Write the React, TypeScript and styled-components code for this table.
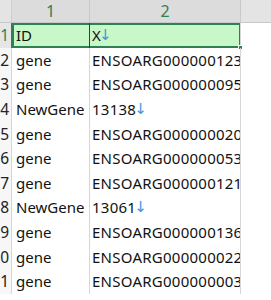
import React from 'react'
import styled, {createGlobalStyle} from 'styled-components'

const GlobalStyle = createGlobalStyle`
    html, body {
        margin: 0;
        padding: 0;
        background: #ffffff;
    }
    body {
        font-family: "Noto Sans", "Open Sans", sans-serif;
        overflow: hidden;
    }
`

type TRow = {
    type: string
    value: string
    arrow?: boolean
}

const rows: TRow[] = [
    {type: 'ID', value: 'X', arrow: true},
    {type: 'gene', value: 'ENSOARG000000123'},
    {type: 'gene', value: 'ENSOARG000000095'},
    {type: 'NewGene', value: '13138', arrow: true},
    {type: 'gene', value: 'ENSOARG000000020'},
    {type: 'gene', value: 'ENSOARG000000053'},
    {type: 'gene', value: 'ENSOARG000000121'},
    {type: 'NewGene', value: '13061', arrow: true},
    {type: 'gene', value: 'ENSOARG000000136'},
    {type: 'gene', value: 'ENSOARG000000022'},
    {type: 'gene', value: 'ENSOARG000000003'},
]

const green = '#2f8052'
const headerGray = '#e4e4e4'
const gridLine = '#d6d6d6'

export default function App() {
    return (
        <Sheet>
            <GlobalStyle/>
            <HeaderRow>
                <Corner/>
                <ColHeader width={77}>1</ColHeader>
                <ColHeader width={150}>2</ColHeader>
                <HeaderRest/>
            </HeaderRow>
            {rows.map((row, i) => {
                const selected = i === 0
                return (
                    <Row key={i}>
                        <RowHeader selected={selected}>{i + 1}</RowHeader>
                        <Range selected={selected}>
                            <Cell width={77} pad={4} cursor={selected}>{row.type}</Cell>
                            <Cell width={150} pad={2} wide>
                                {row.value}
                                {row.arrow && <Arrow>↓</Arrow>}
                            </Cell>
                            {selected && <FillHandle/>}
                        </Range>
                        <Rest/>
                    </Row>
                )
            })}
        </Sheet>
    )
}

const Sheet = styled.div`
    width: 271px;
    height: 300px;
    overflow: hidden;
    display: flex;
    flex-direction: column;
    background: #ffffff;
`

const HeaderRow = styled.div`
    display: flex;
    height: 23px;
    flex-shrink: 0;
    background: ${headerGray};
    border-bottom: 1px solid #c8c8c8;
    box-sizing: border-box;
`

const Corner = styled.div`
    width: 12px;
    border-right: 1px solid #cfcfcf;
    box-sizing: border-box;
`

const ColHeader = styled.div<{width: number}>`
    width: ${({width}) => width}px;
    border-right: 1px solid #c9c9c9;
    display: flex;
    align-items: center;
    justify-content: center;
    font-size: 16px;
    color: ${green};
    background: #dcdcdc;
`

const HeaderRest = styled.div`
    flex: 1;
`

const Row = styled.div`
    display: flex;
    height: 24.6px;
    flex-shrink: 0;
`

const RowHeader = styled.div<{selected: boolean}>`
    width: 12px;
    flex-shrink: 0;
    box-sizing: border-box;
    border-right: 1px solid ${({selected}) => selected ? green : gridLine};
    background: ${({selected}) => selected ? '#e6e6e6' : '#f7f7f7'};
    display: flex;
    align-items: center;
    justify-content: flex-end;
    padding-right: 2px;
    overflow: hidden;
    font-size: 15.5px;
    color: ${({selected}) => selected ? green : '#222222'};
    white-space: nowrap;
`

const Range = styled.div<{selected: boolean}>`
    position: relative;
    display: flex;
    background: ${({selected}) => selected ? '#c8f7c8' : 'transparent'};
    box-shadow: ${({selected}) => selected ? `inset 0 0 0 2px ${green}` : 'none'};
`

const Cell = styled.div<{width: number, pad: number, cursor?: boolean, wide?: boolean}>`
    width: ${({width, pad}) => width - pad}px;
    padding-left: ${({pad}) => pad}px;
    border-right: 1px solid ${({cursor}) => cursor ? '#4e2f44' : gridLine};
    display: flex;
    align-items: center;
    overflow: hidden;
    white-space: nowrap;
    font-size: 15px;
    letter-spacing: ${({wide}) => wide ? '0.25px' : '0'};
    color: #111111;
`

const Arrow = styled.span`
    color: #3d98e0;
    font-size: 15px;
    font-family: "DejaVu Sans", sans-serif;
    margin-left: -2px;
`

const FillHandle = styled.div`
    position: absolute;
    right: -2px;
    bottom: -2px;
    width: 5px;
    height: 5px;
    background: ${green};
    border: 1px solid #ffffff;
    box-sizing: border-box;
`

const Rest = styled.div`
    flex: 1;
`
